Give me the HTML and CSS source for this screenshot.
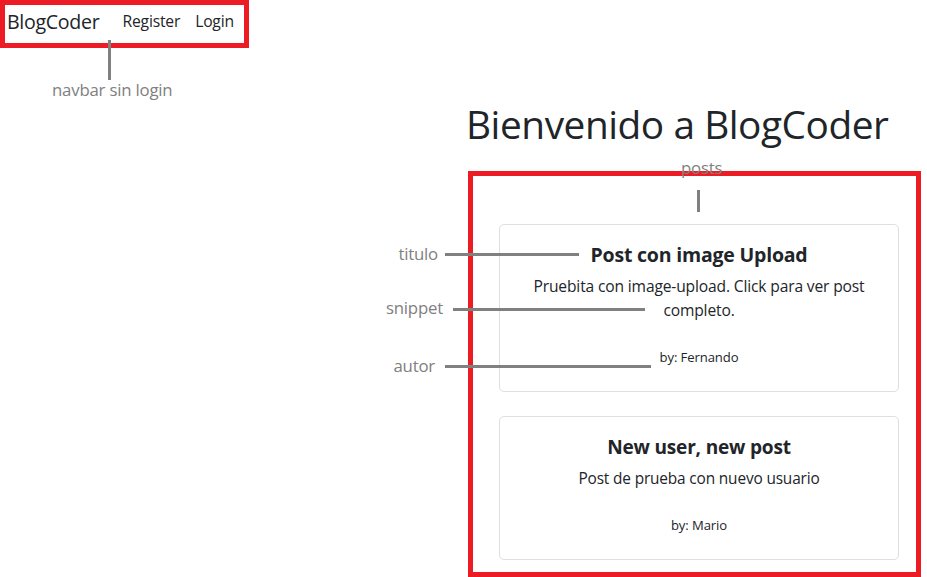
FILE: index.html
```html
<!DOCTYPE html>
<html lang="es">
<head>
<meta charset="utf-8">
<title>BlogCoder</title>
<link rel="stylesheet" href="styles.css">
</head>
<body>
<div class="page">
  <nav class="navbar">
    <a class="brand" href="#">BlogCoder</a>
    <a class="nav-link first" href="#">Register</a>
    <a class="nav-link" href="#">Login</a>
  </nav>
  <main class="main">
    <div class="spacer"></div>
    <div class="content">
      <h1 class="title">Bienvenido a BlogCoder</h1>
      <section class="posts">
        <article class="card">
          <h5 class="card-title">Post con image Upload</h5>
          <p class="card-text">Pruebita con image-upload. Click para ver post completo.</p>
          <p class="card-author">by: Fernando</p>
        </article>
        <article class="card card-b">
          <h5 class="card-title">New user, new post</h5>
          <p class="card-text">Post de prueba con nuevo usuario</p>
          <p class="card-author">by: Mario</p>
        </article>
      </section>
    </div>
  </main>

  <div class="box box-nav"></div>
  <div class="vline vline-nav"></div>
  <div class="note note-nav">navbar sin login</div>

  <div class="box box-posts"></div>
  <div class="note note-posts">posts</div>
  <div class="vline vline-posts"></div>

  <div class="note note-left note-titulo">titulo</div>
  <div class="hline hline-titulo"></div>
  <div class="note note-left note-snippet">snippet</div>
  <div class="hline hline-snippet"></div>
  <div class="note note-left note-autor">autor</div>
  <div class="hline hline-autor"></div>
</div>
</body>
</html>
```

FILE: styles.css
```css
* { box-sizing: border-box; }
html, body { margin: 0; padding: 0; background: #fff; }
body {
  font-family: "Open Sans", "Noto Sans", "Liberation Sans", sans-serif;
  color: #212529;
}
.page {
  position: relative;
  width: 927px;
  height: 577px;
  overflow: hidden;
}
a { color: #212529; text-decoration: none; }

.navbar {
  display: flex;
  align-items: center;
  height: 42px;
  padding-left: 7px;
}
.brand { font-size: 19.6px; letter-spacing: -0.3px; }
.nav-link { font-size: 15.7px; margin-left: 15px; letter-spacing: -0.2px; }
.nav-link.first { margin-left: 23px; }

.main {
  display: grid;
  grid-template-columns: 466px 1fr;
}
.content { display: flex; flex-direction: column; }
.title {
  margin: 58px 0 0 0;
  font-size: 38.8px;
  font-weight: 400;
  line-height: 48px;
  letter-spacing: -0.45px;
}
.posts {
  display: flex;
  flex-direction: column;
  gap: 24px;
  margin: 76px 0 0 33px;
  width: 400px;
}
.card {
  border: 1px solid #dfdfdf;
  border-radius: 5px;
  padding: 17px 16px 17px;
  text-align: center;
}
.card-title {
  margin: 0 0 6px;
  font-size: 19.5px;
  font-weight: 700;
  line-height: 26px;
  letter-spacing: -0.2px;
}
.card-text {
  margin: 0;
  font-size: 15.6px;
  line-height: 24px;
  letter-spacing: -0.15px;
}
.card-b .card-title { font-size: 19.1px; }
.card-b .card-text { font-size: 15.4px; line-height: 25px; }
.card-b .card-author { margin-top: 24px; }
.card-author {
  margin: 25px 0 6px;
  font-size: 13.1px;
  line-height: 21px;
  letter-spacing: -0.1px;
}

/* annotation overlay */
.box {
  position: absolute;
  border: 5px solid #ed1c24;
}
.box-nav { left: 0; top: 0; width: 249px; height: 48px; }
.box-posts { left: 468px; top: 171px; width: 453px; height: 406px; }
.vline { position: absolute; width: 3px; background: #808080; }
.vline-nav { left: 108px; top: 40px; height: 40px; }
.vline-posts { left: 697px; top: 190px; height: 22px; }
.hline { position: absolute; height: 3px; background: #808080; }
.hline-titulo { left: 445px; top: 253px; width: 134px; }
.hline-snippet { left: 453px; top: 308px; width: 192px; }
.hline-autor { left: 445px; top: 365px; width: 206px; }
.note {
  position: absolute;
  color: #808080;
  font-size: 16.8px;
  line-height: 20px;
  white-space: nowrap;
  letter-spacing: -0.2px;
}
.note-nav { left: 52px; top: 80px; }
.note-posts { left: 681px; top: 158px; }
.note-left { text-align: right; width: 80px; }
.note-titulo { left: 358px; top: 244px; }
.note-snippet { left: 363px; top: 298px; }
.note-autor { left: 355px; top: 356px; }
```
